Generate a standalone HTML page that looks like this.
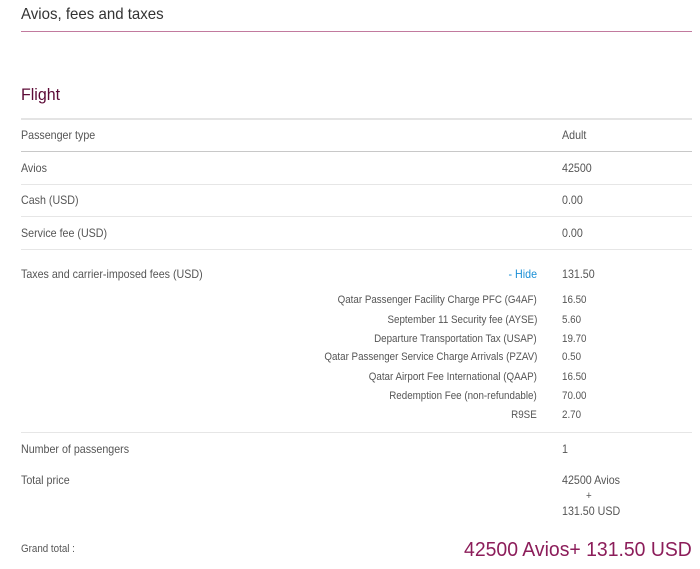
<!DOCTYPE html>
<html><head><style>
body{margin:0;width:700px;height:569px;background:#fff;font-family:"Liberation Sans",Arial,sans-serif;color:#555;position:relative;overflow:hidden}
.t{position:absolute;font-size:12px;line-height:16px;white-space:nowrap;transform:scaleX(.89);transform-origin:left center}
.r{text-align:right;right:163px;transform-origin:right center}
.v{left:562px}
.l{left:21px}
.hr{position:absolute;left:21px;width:671px;height:1px;background:#e6e6e6}
.s{font-size:11px}
</style></head><body>
<div class="t l" style="top:4px;font-size:16px;line-height:22px;color:#333;transform:scaleX(.94)">Avios, fees and taxes</div>
<div class="hr" style="top:31px;height:1px;background:#c27a9e"></div>
<div class="t l" style="top:84px;font-size:17px;line-height:22px;color:#5c0a36;transform:scaleX(.94)">Flight</div>
<div class="hr" style="top:118px;height:2px;background:#e4e4e4"></div>
<div class="t l" style="top:127px">Passenger type</div><div class="t v" style="top:127px">Adult</div>
<div class="hr" style="top:151px;height:1px;background:#c8c8c8"></div>
<div class="t l" style="top:160px">Avios</div><div class="t v" style="top:160px">42500</div>
<div class="hr" style="top:184px"></div>
<div class="t l" style="top:192px">Cash (USD)</div><div class="t v" style="top:192px">0.00</div>
<div class="hr" style="top:216px"></div>
<div class="t l" style="top:225px">Service fee (USD)</div><div class="t v" style="top:225px">0.00</div>
<div class="hr" style="top:249px"></div>
<div class="t l" style="top:266px">Taxes and carrier-imposed fees (USD)</div>
<div class="t r" style="top:266px;color:#1a8fd6">- Hide</div><div class="t v" style="top:266px">131.50</div>
<div class="t r s" style="top:292px">Qatar Passenger Facility Charge PFC (G4AF)</div><div class="t v s" style="top:292px">16.50</div>
<div class="t r s" style="top:312px">September 11 Security fee (AYSE)</div><div class="t v s" style="top:312px">5.60</div>
<div class="t r s" style="top:331px">Departure Transportation Tax (USAP)</div><div class="t v s" style="top:331px">19.70</div>
<div class="t r s" style="top:349px">Qatar Passenger Service Charge Arrivals (PZAV)</div><div class="t v s" style="top:349px">0.50</div>
<div class="t r s" style="top:369px">Qatar Airport Fee International (QAAP)</div><div class="t v s" style="top:369px">16.50</div>
<div class="t r s" style="top:388px">Redemption Fee (non-refundable)</div><div class="t v s" style="top:388px">70.00</div>
<div class="t r s" style="top:407px">R9SE</div><div class="t v s" style="top:407px">2.70</div>
<div class="hr" style="top:432px"></div>
<div class="t l" style="top:441px">Number of passengers</div><div class="t v" style="top:441px">1</div>
<div class="t l" style="top:472px">Total price</div><div class="t v" style="top:472px">42500 Avios</div>
<div class="t" style="top:488px;left:586px;font-size:11px">+</div>
<div class="t v" style="top:503px">131.50 USD</div>
<div class="t l s" style="top:541px">Grand total :</div>
<div class="t" style="top:537px;right:8px;font-size:20px;line-height:26px;color:#8c1d5a;transform:scaleX(.97);transform-origin:right center">42500 Avios+ 131.50 USD</div>
</body></html>
